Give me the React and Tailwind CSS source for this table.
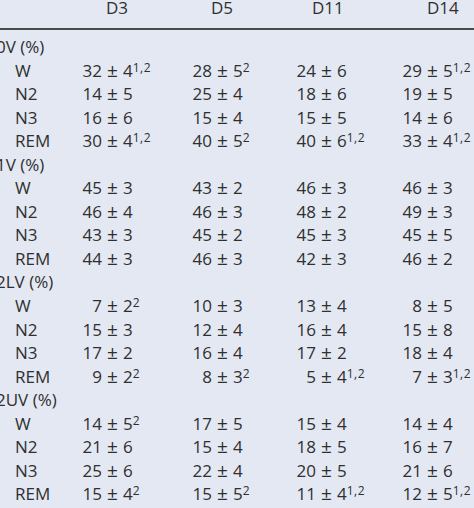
import React from 'react';

const groups = [
  {
    name: '0V (%)',
    rows: [
      ['W', ['32', '4', '1,2'], ['28', '5', '2'], ['24', '6'], ['29', '5', '1,2']],
      ['N2', ['14', '5'], ['25', '4'], ['18', '6'], ['19', '5']],
      ['N3', ['16', '6'], ['15', '4'], ['15', '5'], ['14', '6']],
      ['REM', ['30', '4', '1,2'], ['40', '5', '2'], ['40', '6', '1,2'], ['33', '4', '1,2']],
    ],
  },
  {
    name: '1V (%)',
    rows: [
      ['W', ['45', '3'], ['43', '2'], ['46', '3'], ['46', '3']],
      ['N2', ['46', '4'], ['46', '3'], ['48', '2'], ['49', '3']],
      ['N3', ['43', '3'], ['45', '2'], ['45', '3'], ['45', '5']],
      ['REM', ['44', '3'], ['46', '3'], ['42', '3'], ['46', '2']],
    ],
  },
  {
    name: '2LV (%)',
    rows: [
      ['W', ['7', '2', '2'], ['10', '3'], ['13', '4'], ['8', '5']],
      ['N2', ['15', '3'], ['12', '4'], ['16', '4'], ['15', '8']],
      ['N3', ['17', '2'], ['16', '4'], ['17', '2'], ['18', '4']],
      ['REM', ['9', '2', '2'], ['8', '3', '2'], ['5', '4', '1,2'], ['7', '3', '1,2']],
    ],
  },
  {
    name: '2UV (%)',
    rows: [
      ['W', ['14', '5', '2'], ['17', '5'], ['15', '4'], ['14', '4']],
      ['N2', ['21', '6'], ['15', '4'], ['18', '5'], ['16', '7']],
      ['N3', ['25', '6'], ['22', '4'], ['20', '5'], ['21', '6']],
      ['REM', ['15', '4', '2'], ['15', '5', '2'], ['11', '4', '1,2'], ['12', '5', '1,2']],
    ],
  },
];

// column widths, each cell's "mean" part ends 32px in
const cellWidths = ['w-[110px]', 'w-[104px]', 'w-[106px]', 'w-[84px]'];

const Cell = ({ value, width }) => {
  const [mean, sd, sup] = value;
  return (
    <div className={`${width} shrink-0 whitespace-nowrap`}>
      <span className="inline-block w-[32px] text-right">{mean}</span>
      <span className="inline-block w-[21px] text-center text-[19px] leading-none">±</span>
      <span>{sd}</span>
      {sup && (
        <span className="relative -top-[5px] text-[12px] leading-none tracking-[0.5px]">{sup}</span>
      )}
    </div>
  );
};

export default function App() {
  return (
    <div className="w-[474px] h-[508px] overflow-hidden bg-[#e3e8f3] text-[#2f2f2f] font-['Open_Sans',sans-serif] text-[17px]">
      {/* Header */}
      <div className="h-[30px] border-b-2 border-[#4a4a4a] pt-[1px]">
        <div className="flex leading-[14px]">
          <div className="w-[70px] shrink-0"></div>
          <div className="w-[110px] shrink-0 pl-[36px]">D3</div>
          <div className="w-[104px] shrink-0 pl-[31px]">D5</div>
          <div className="w-[106px] shrink-0 pl-[28px]">D11</div>
          <div className="w-[84px] shrink-0 pl-[37px]">D14</div>
        </div>
      </div>

      {/* Body */}
      <div className="pt-[5px]">
        {groups.map((g) => (
          <div key={g.name}>
            <div className="h-[23.55px] leading-[23.55px] -ml-[4px] whitespace-nowrap">{g.name}</div>
            {g.rows.map(([label, ...cells]) => (
              <div key={label} className="flex h-[23.55px] leading-[23.55px]">
                <div className="w-[70px] shrink-0 pl-[15px]">{label}</div>
                {cells.map((c, i) => (
                  <Cell key={i} value={c} width={cellWidths[i]} />
                ))}
              </div>
            ))}
          </div>
        ))}
      </div>
    </div>
  );
}
